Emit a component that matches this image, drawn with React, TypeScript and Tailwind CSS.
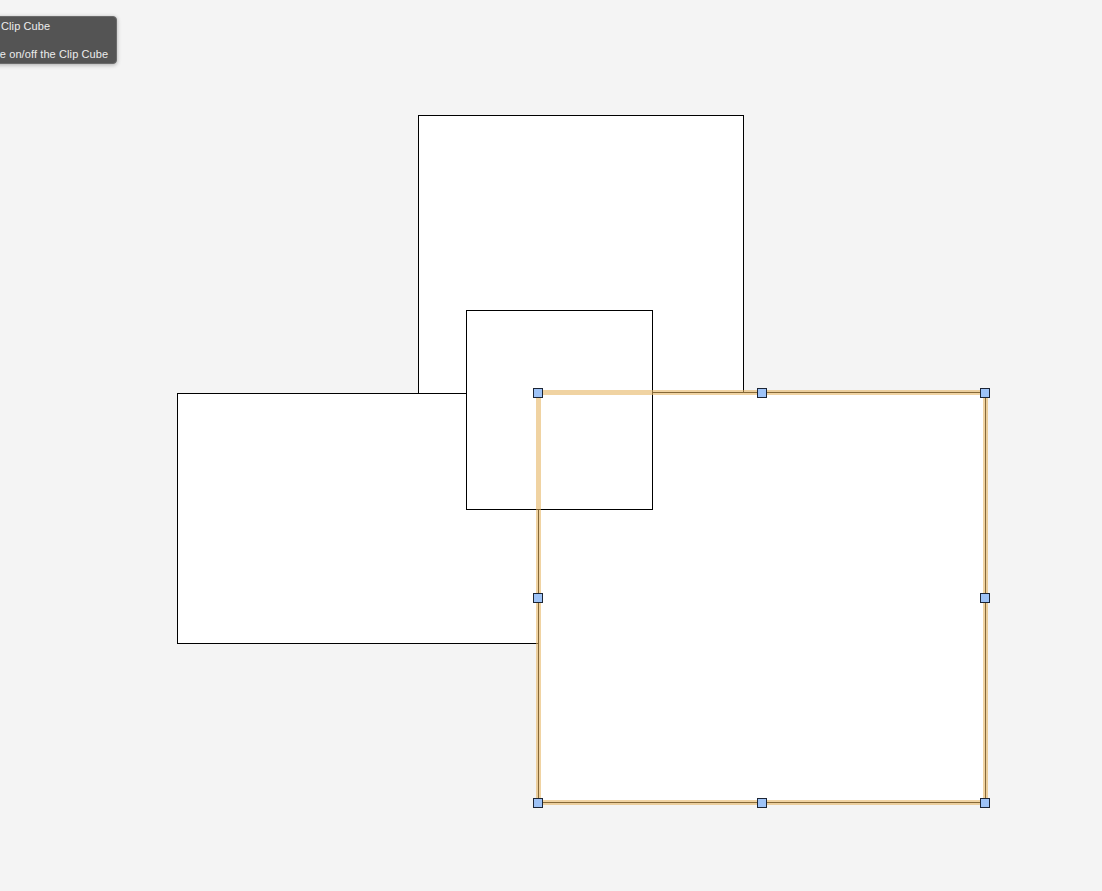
import React from "react";

const handles: [number, number][] = [
  [538, 392], [762, 392], [985, 392],
  [538, 597], [985, 597],
  [538, 802], [762, 802], [985, 802],
];

export default function App() {
  return (
    <div className="relative w-[1102px] h-[891px] overflow-hidden bg-[#f4f4f4]" style={{ fontFamily: '"Liberation Sans", Arial, sans-serif' }}>
      {/* top rect */}
      <div className="absolute left-[418px] top-[115px] w-[326px] h-[279px] bg-white border border-black" />
      {/* left rect */}
      <div className="absolute left-[177px] top-[393px] w-[362px] h-[251px] bg-white border border-black" />
      {/* selected rect */}
      <div className="absolute left-[538px] top-[392px] w-[448px] h-[411px] bg-white border border-black" />
      {/* small square */}
      <div className="absolute left-[466px] top-[310px] w-[187px] h-[200px] bg-white border border-black" />
      {/* selection halo */}
      <div className="absolute left-[536px] top-[390px] w-[452px] h-[415px] border-[5px] border-[rgba(230,180,95,0.58)] pointer-events-none" />
      {/* handles */}
      {handles.map(([x, y], i) => (
        <div
          key={i}
          className="absolute w-[10px] h-[10px] bg-[#9ec3f7] border border-[#1c2535]"
          style={{ left: x - 5, top: y - 4 }}
        />
      ))}
      {/* tooltip */}
      <div className="absolute left-[-34px] top-[16px] w-[151px] h-[48px] rounded-[4px] bg-[#545454] border border-[#6b6b6b] shadow-[0_1px_4px_rgba(0,0,0,0.3)] pl-[6px] pt-[2px] text-[11px] leading-[14px] text-[#ececec] flex flex-col gap-[14px]">
        <div className="ml-[28px] whitespace-nowrap tracking-[0.1px]">Clip Cube</div>
        <div className="whitespace-nowrap tracking-[0.1px]">Toggle on/off the Clip Cube</div>
      </div>
    </div>
  );
}
